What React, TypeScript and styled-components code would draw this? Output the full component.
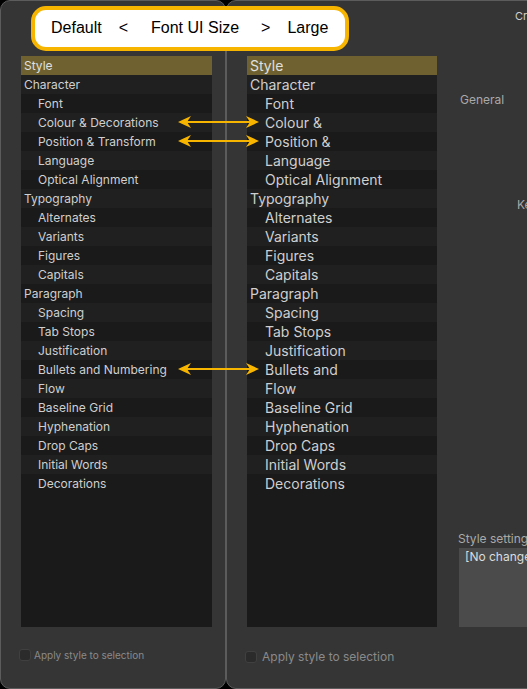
import React from 'react';
import styled, { createGlobalStyle } from 'styled-components';

interface StyleItem {
  label: string;
  level: number;
}

const items: StyleItem[] = [
  { label: 'Character', level: 0 },
  { label: 'Font', level: 1 },
  { label: 'Colour & Decorations', level: 1 },
  { label: 'Position & Transform', level: 1 },
  { label: 'Language', level: 1 },
  { label: 'Optical Alignment', level: 1 },
  { label: 'Typography', level: 0 },
  { label: 'Alternates', level: 1 },
  { label: 'Variants', level: 1 },
  { label: 'Figures', level: 1 },
  { label: 'Capitals', level: 1 },
  { label: 'Paragraph', level: 0 },
  { label: 'Spacing', level: 1 },
  { label: 'Tab Stops', level: 1 },
  { label: 'Justification', level: 1 },
  { label: 'Bullets and Numbering', level: 1 },
  { label: 'Flow', level: 1 },
  { label: 'Baseline Grid', level: 1 },
  { label: 'Hyphenation', level: 1 },
  { label: 'Drop Caps', level: 1 },
  { label: 'Initial Words', level: 1 },
  { label: 'Decorations', level: 1 },
];

// the large panel truncates long names
const largeLabels: Record<string, string> = {
  'Colour & Decorations': 'Colour &',
  'Position & Transform': 'Position &',
  'Bullets and Numbering': 'Bullets and',
};

const GlobalStyle = createGlobalStyle`
  html, body {
    margin: 0;
    padding: 0;
    background: #000;
  }
  body {
    font-family: Inter, "Noto Sans", sans-serif;
  }
`;

const Screen = styled.div`
  position: relative;
  display: flex;
  width: 527px;
  height: 689px;
  overflow: hidden;
  background: #000;
`;

const Window = styled.div<{ $width: number }>`
  display: flex;
  flex-shrink: 0;
  box-sizing: border-box;
  width: ${p => p.$width}px;
  height: 689px;
  background: #353535;
  border: 1px solid #5c5c5c;
  border-radius: 10px;
`;

const Column = styled.div`
  display: flex;
  flex-direction: column;
  padding: 55px 0 0 20px;
`;

const List = styled.div<{ $width: number }>`
  width: ${p => p.$width}px;
  height: 571px;
  background: #1a1a1a;
  display: flex;
  flex-direction: column;
`;

const Header = styled.div<{ $size: number; $pad: number }>`
  height: 19px;
  line-height: 19px;
  background: #6f6230;
  color: #e0e0e0;
  font-size: ${p => p.$size}px;
  padding-left: ${p => p.$pad}px;
`;

const Row = styled.div<{ $size: number; $pad: number; $odd: boolean }>`
  height: 19px;
  line-height: 19px;
  font-size: ${p => p.$size}px;
  padding-left: ${p => p.$pad}px;
  color: #cfcfcf;
  background: ${p => (p.$odd ? '#1a1a1a' : '#202020')};
  white-space: nowrap;
  overflow: hidden;
`;

const CheckRow = styled.label<{ $size: number }>`
  display: flex;
  align-items: center;
  gap: ${p => (p.$size > 11 ? 5 : 3)}px;
  margin: 22px 0 0 -2px;
  font-size: ${p => p.$size}px;
  color: #8a8a8a;
`;

const Box = styled.span<{ $size: number }>`
  box-sizing: border-box;
  width: ${p => p.$size}px;
  height: ${p => p.$size}px;
  border-radius: 3px;
  background: #2b2b2b;
  border: 1px solid #404040;
`;

const Side = styled.div`
  display: flex;
  flex-direction: column;
  padding: 8px 0 61px 21px;
  flex: 1;
  font-size: 12px;
  color: #a9a9a9;
  white-space: nowrap;
`;

const SideText = styled.div<{ $indent: number; $top: number; $color?: string; $size?: number }>`
  padding-left: ${p => p.$indent}px;
  margin-top: ${p => p.$top}px;
  line-height: 15px;
  font-size: ${p => p.$size ?? 12}px;
  color: ${p => p.$color ?? '#a9a9a9'};
`;

const SettingsLabel = styled.div`
  margin-top: auto;
  line-height: 15px;
  margin-bottom: 2px;
`;

const SettingsBox = styled.div`
  margin-left: 1px;
  height: 78px;
  background: #4b4b4b;
  color: #dcdcdc;
  padding: 1px 0 0 6px;
  line-height: 15px;
`;

const Callout = styled.div`
  position: absolute;
  left: 31px;
  top: 6px;
  box-sizing: border-box;
  width: 318px;
  height: 45px;
  border: 4px solid #f7b500;
  border-radius: 15px;
  background: #fff;
  display: flex;
  align-items: center;
  padding: 0 0 2px 16px;
  font-family: "Liberation Sans", Arial, sans-serif;
  font-size: 16px;
  color: #000;
`;

const Word = styled.span<{ $gap: number }>`
  margin-right: ${p => p.$gap}px;
`;

const Arrow = styled.svg<{ $y: number }>`
  position: absolute;
  left: 177px;
  top: ${p => p.$y - 7}px;
`;

const ArrowIcon: React.FC<{ y: number }> = ({ y }) => (
  <Arrow $y={y} width="83" height="14" viewBox="0 0 83 14">
    <line x1="8" y1="7" x2="75" y2="7" stroke="#f7b500" strokeWidth="2" />
    <path d="M1 7 L14 1 L10 7 L14 13 Z" fill="#f7b500" />
    <path d="M82 7 L69 1 L73 7 L69 13 Z" fill="#f7b500" />
  </Arrow>
);

const StyleList: React.FC<{ large: boolean }> = ({ large }) => {
  const size = large ? 14 : 12;
  return (
    <List $width={large ? 190 : 191}>
      <Header $size={size} $pad={3}>Style</Header>
      {items.map((item, i) => (
        <Row
          key={item.label}
          $size={size}
          $pad={item.level ? (large ? 18 : 17) : 3}
          $odd={i % 2 === 1}
        >
          {large ? largeLabels[item.label] ?? item.label : item.label}
        </Row>
      ))}
    </List>
  );
};

const App: React.FC = () => (
  <Screen>
    <GlobalStyle />
    <Window $width={226}>
      <Column>
        <StyleList large={false} />
        <CheckRow $size={10}>
          <Box $size={12} />
          Apply style to selection
        </CheckRow>
      </Column>
    </Window>
    <Window $width={380}>
      <Column>
        <StyleList large />
        <CheckRow $size={12}>
          <Box $size={12} />
          Apply style to selection
        </CheckRow>
      </Column>
      <Side>
        <SideText $indent={57} $top={0} $size={11} $color="#cfcfcf">
          Create
        </SideText>
        <SideText $indent={2} $top={68}>General</SideText>
        <SideText $indent={59} $top={90}>Keyboard shortcut</SideText>
        <SettingsLabel>Style settings</SettingsLabel>
        <SettingsBox>[No change]</SettingsBox>
      </Side>
    </Window>

    <Callout>
      <Word $gap={17}>Default</Word>
      <Word $gap={23}>&lt;</Word>
      <Word $gap={22}>Font UI Size</Word>
      <Word $gap={17}>&gt;</Word>
      <Word $gap={0}>Large</Word>
    </Callout>
    <ArrowIcon y={122} />
    <ArrowIcon y={141} />
    <ArrowIcon y={369} />
  </Screen>
);

export default App;
